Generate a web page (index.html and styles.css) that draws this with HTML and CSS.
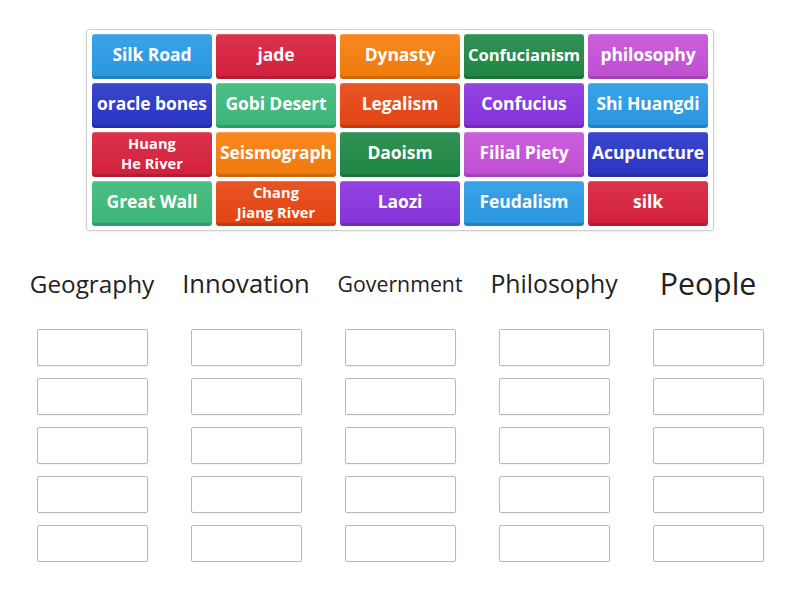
FILE: index.html
```html
<!DOCTYPE html>
<html>
<head>
<meta charset="utf-8">
<link rel="stylesheet" href="styles.css">
</head>
<body>
<div class="bank">
  <div class="tile lb">Silk Road</div>
  <div class="tile rd">jade</div>
  <div class="tile or">Dynasty</div>
  <div class="tile dg fit">Confucianism</div>
  <div class="tile mg">philosophy</div>
  <div class="tile db">oracle bones</div>
  <div class="tile gr">Gobi Desert</div>
  <div class="tile ro">Legalism</div>
  <div class="tile pu">Confucius</div>
  <div class="tile lb">Shi Huangdi</div>
  <div class="tile rd two"><span>Huang</span><span>He River</span></div>
  <div class="tile or">Seismograph</div>
  <div class="tile dg">Daoism</div>
  <div class="tile mg">Filial Piety</div>
  <div class="tile db">Acupuncture</div>
  <div class="tile gr">Great Wall</div>
  <div class="tile ro two"><span>Chang</span><span>Jiang River</span></div>
  <div class="tile pu">Laozi</div>
  <div class="tile lb">Feudalism</div>
  <div class="tile rd">silk</div>
</div>
<div class="groups">
  <div class="group">
    <div class="head h-geo">Geography</div>
    <div class="slot"></div><div class="slot"></div><div class="slot"></div><div class="slot"></div><div class="slot"></div>
  </div>
  <div class="group">
    <div class="head h-inn">Innovation</div>
    <div class="slot"></div><div class="slot"></div><div class="slot"></div><div class="slot"></div><div class="slot"></div>
  </div>
  <div class="group">
    <div class="head h-gov">Government</div>
    <div class="slot"></div><div class="slot"></div><div class="slot"></div><div class="slot"></div><div class="slot"></div>
  </div>
  <div class="group">
    <div class="head h-phi">Philosophy</div>
    <div class="slot"></div><div class="slot"></div><div class="slot"></div><div class="slot"></div><div class="slot"></div>
  </div>
  <div class="group">
    <div class="head h-peo">People</div>
    <div class="slot"></div><div class="slot"></div><div class="slot"></div><div class="slot"></div><div class="slot"></div>
  </div>
</div>
</body>
</html>
```
FILE: styles.css
```css
html, body {
  margin: 0;
  padding: 0;
  background: #fff;
  font-family: "Open Sans", "Noto Sans", sans-serif;
}
.bank {
  width: 616px;
  margin: 29px auto 0;
  padding: 4px 5px;
  border: 1px solid #cfcfcf;
  border-radius: 3px;
  display: grid;
  grid-template-columns: repeat(5, 120px);
  grid-auto-rows: 45px;
  gap: 4px;
  box-shadow: 0 1px 2px rgba(0,0,0,0.08);
}
.tile {
  border-radius: 3px;
  color: #fff;
  font-weight: 700;
  font-size: 17.5px;
  line-height: 21px;
  display: flex;
  align-items: center;
  justify-content: center;
  text-align: center;
  white-space: nowrap;
  letter-spacing: -0.1px;
  padding-bottom: 4px;
  box-sizing: border-box;
  box-shadow: inset 0 -3px 0 rgba(0,0,0,0.14), inset 0 1px 0 rgba(255,255,255,0.18);
  background-image: linear-gradient(rgba(255,255,255,0.08), rgba(0,0,0,0.03));
}
.tile.fit {
  font-size: 16.6px;
}
.tile.two {
  flex-direction: column;
  font-size: 14.6px;
  line-height: 20px;
  letter-spacing: 0.1px;
}
.lb { background-color: #2a9be6; }
.rd { background-color: #d9213d; }
.or { background-color: #f77e0c; }
.dg { background-color: #1f8946; }
.mg { background-color: #c552d8; }
.db { background-color: #2a36c8; }
.gr { background-color: #3dba7b; }
.ro { background-color: #e84612; }
.pu { background-color: #8a34df; }

.groups {
  display: grid;
  grid-template-columns: repeat(5, 111px);
  column-gap: 43px;
  justify-content: center;
  margin-top: 29px;
}
.group {
  display: flex;
  flex-direction: column;
  align-items: stretch;
  gap: 12px;
}
.head {
  height: 46px;
  margin-bottom: 11px;
  display: flex;
  align-items: center;
  justify-content: center;
  white-space: nowrap;
  color: #222;
  font-weight: 400;
}
.h-geo { font-size: 24.3px; }
.h-inn { font-size: 25.6px; }
.h-gov { font-size: 21.3px; }
.h-phi { font-size: 24.8px; }
.h-peo { font-size: 30.3px; }
.slot {
  height: 37px;
  box-sizing: border-box;
  border: 1px solid #b9b9b9;
  border-radius: 2px;
  background: #fff;
  box-shadow: 0 1px 2px rgba(0,0,0,0.06);
}
```
